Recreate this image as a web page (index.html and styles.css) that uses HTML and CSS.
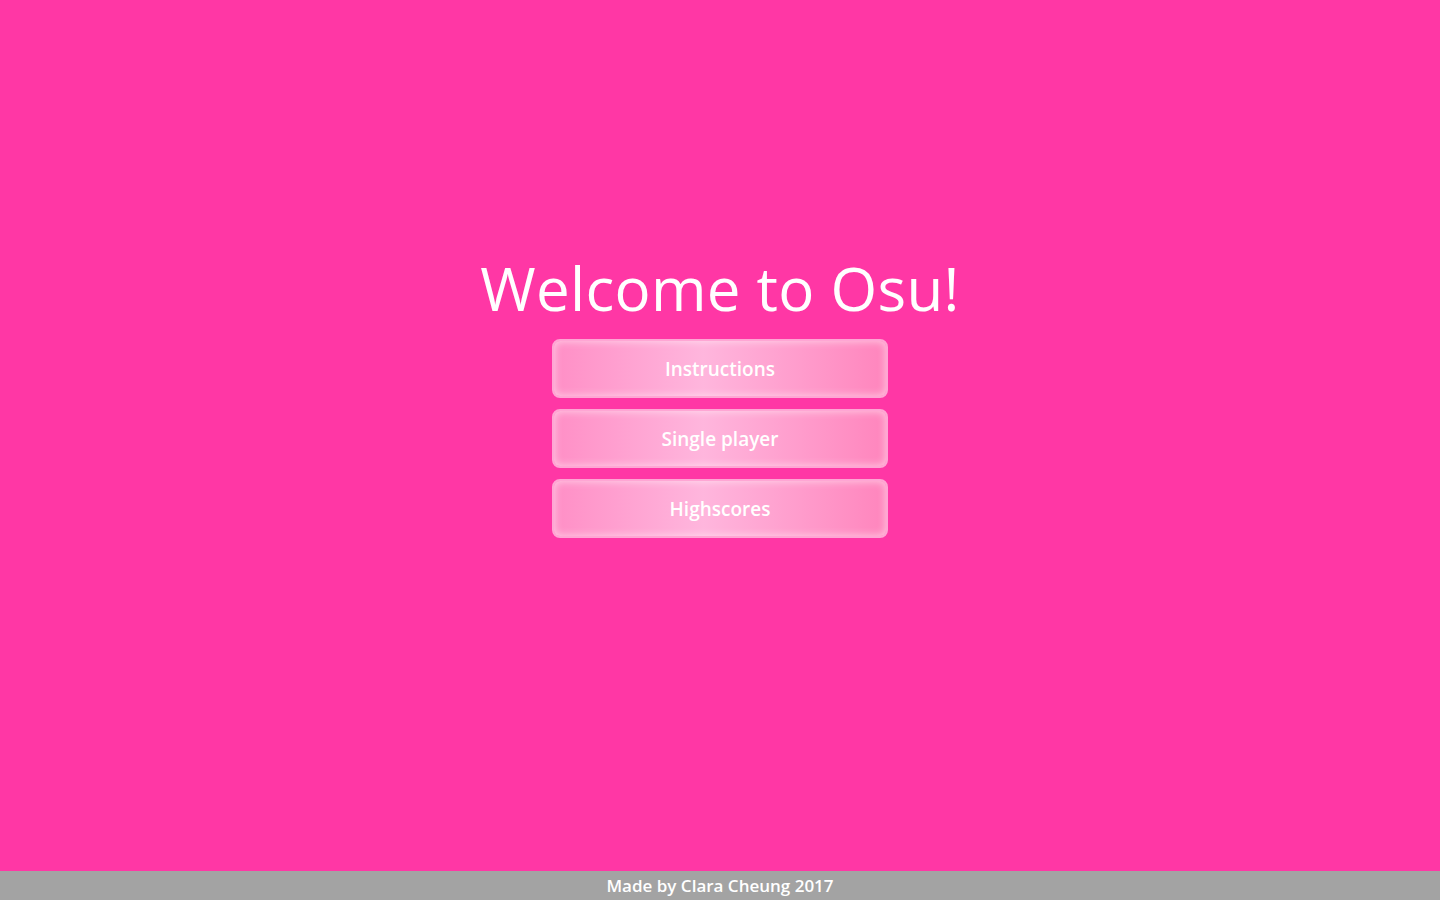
FILE: index.html
```html
<!DOCTYPE html>
<html lang="en">

<head>
  <meta charset="UTF-8">
  <meta name="viewport" content="width=device-width, initial-scale=1.0">
  <title>Osu!</title>
  <link rel="stylesheet" href="styles.css">
</head>

<body>
  <main class="menu">
    <h1 class="title">Welcome to Osu!</h1>
    <div class="buttons">
      <button class="menu-btn">Instructions</button>
      <button class="menu-btn">Single player</button>
      <button class="menu-btn">Highscores</button>
    </div>
  </main>

  <footer class="footer">Made by Clara Cheung 2017</footer>
</body>

</html>
```

FILE: styles.css
```css
html, body {
  height: 100%;
}

body {
  margin: 0;
  display: flex;
  flex-direction: column;
  font-family: "Open Sans", "Noto Sans", sans-serif;
  background-color: #ff37a5;
  color: white;
}

.menu {
  flex: 1;
  display: flex;
  flex-direction: column;
  align-items: center;
  padding-top: 250px;
}

.title {
  margin: 0 0 13px;
  font-size: 60px;
  font-weight: 500;
  line-height: 76px;
  letter-spacing: 0.3px;
}

.buttons {
  display: flex;
  flex-direction: column;
  gap: 11px;
}

.menu-btn {
  width: 336px;
  height: 59px;
  border: 2px solid #ffa6d4;
  border-radius: 8px;
  background: linear-gradient(to right, #ff8fc6, #ffb6dd 45%, #ff85bd);
  box-shadow: inset 0 0 8px rgba(255, 255, 255, 0.6);
  color: white;
  font-family: inherit;
  font-size: 19px;
  font-weight: 600;
  cursor: pointer;
}

.footer {
  height: 29px;
  line-height: 29px;
  background-color: #a3a3a3;
  text-align: center;
  font-size: 17px;
  font-weight: 600;
}
```
